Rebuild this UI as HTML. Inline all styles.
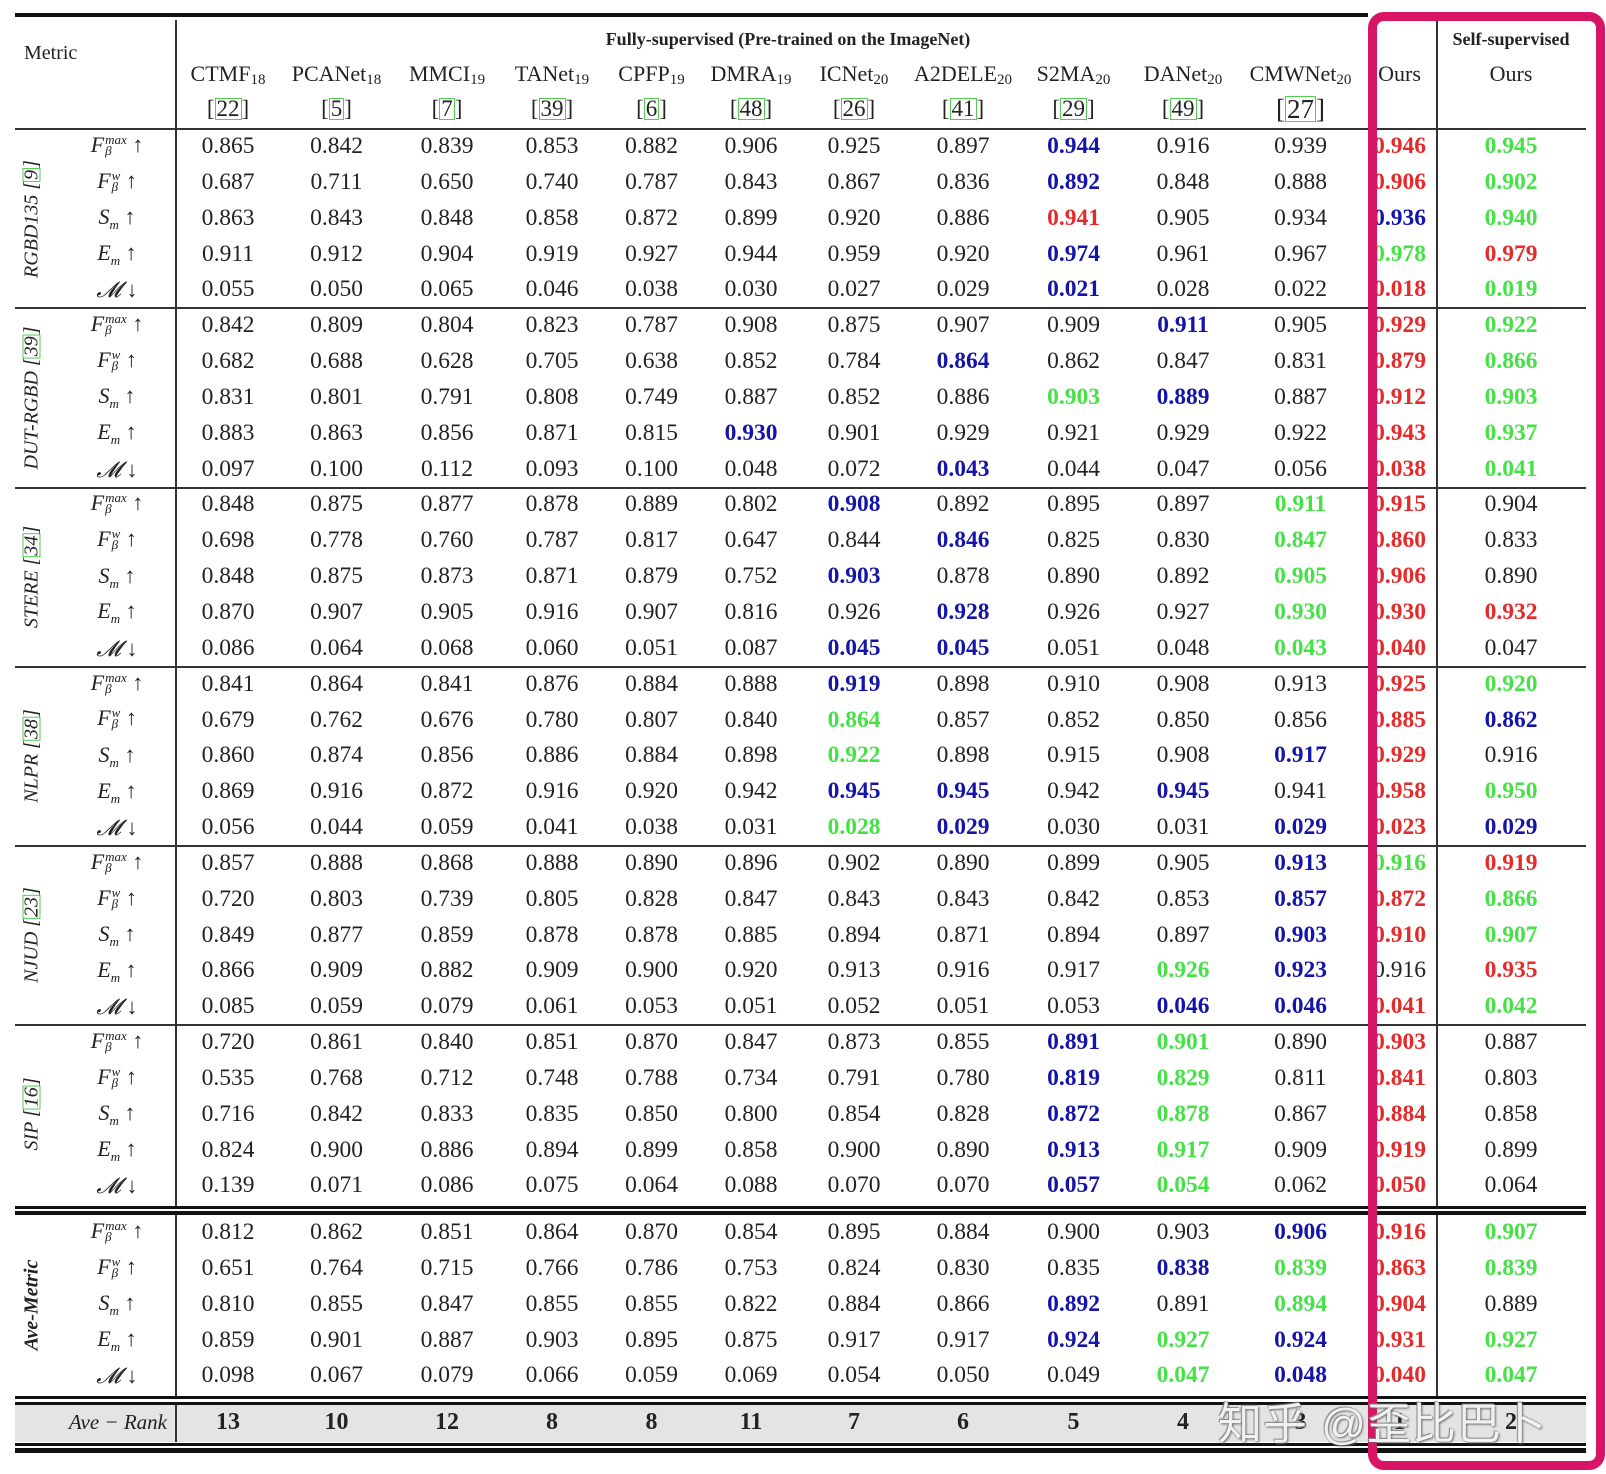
<!DOCTYPE html>
<html><head><meta charset="utf-8">
<style>
html,body{margin:0;padding:0;background:#fff;}
body{width:1606px;height:1474px;position:relative;overflow:hidden;font-family:"Liberation Serif",serif;color:#222;}
.a{position:absolute;}
.hl{position:absolute;background:#333;}
table{position:absolute;left:15px;border-collapse:collapse;table-layout:fixed;}
tr{height:35.84px;}
td{padding:0;height:35.84px;text-align:center;font-size:23.5px;white-space:nowrap;line-height:35.84px;overflow:hidden;}
td.m{font-style:italic;font-size:22px;padding-left:44px;text-align:center;line-height:0;}
.r{color:#e52a2a;font-weight:bold;}
.b{color:#1414a8;font-weight:bold;}
.g{color:#44e244;font-weight:bold;}
.sb{font-size:13px;position:relative;top:5px;}
.st{display:inline-block;vertical-align:middle;line-height:11px;text-align:left;font-size:13px;margin-left:1px;position:relative;top:-2px;}
.hd{position:absolute;font-size:22px;text-align:center;white-space:nowrap;}
.hd sub{font-size:15px;vertical-align:-3px;line-height:0;}
.ref{position:absolute;font-size:23px;text-align:center;}
.gb{border:1.5px solid #5c5;padding:0 1px;line-height:20px;display:inline-block;}
.ds{position:absolute;font-style:italic;font-size:20px;transform:translate(-50%,-50%) rotate(-90deg);white-space:nowrap;}
.rk td{font-weight:bold;font-size:24px;}
</style></head><body>

<div class="hl" style="left:15px;top:13px;width:1353px;height:4px;background:#111"></div>
<div class="hl" style="left:15px;top:128px;width:1571px;height:1.5px"></div>
<div class="hl" style="left:15px;top:307px;width:1571px;height:1.5px"></div>
<div class="hl" style="left:15px;top:487px;width:1571px;height:1.5px"></div>
<div class="hl" style="left:15px;top:666px;width:1571px;height:1.5px"></div>
<div class="hl" style="left:15px;top:845px;width:1571px;height:1.5px"></div>
<div class="hl" style="left:15px;top:1024px;width:1571px;height:1.5px"></div>
<div class="hl" style="left:15px;top:1206px;width:1571px;height:2.5px;background:#111"></div>
<div class="hl" style="left:15px;top:1211px;width:1571px;height:3.5px;background:#111"></div>
<div class="hl" style="left:15px;top:1396px;width:1571px;height:2.5px;background:#111"></div>
<div class="a" style="left:15px;top:1402px;width:1571px;height:40px;background:#e4e4e4;border-top:3.5px solid #111;box-sizing:border-box"></div>
<div class="hl" style="left:15px;top:1443px;width:1571px;height:2.5px;background:#111"></div>
<div class="hl" style="left:15px;top:1448px;width:1571px;height:5px;background:#111"></div>
<div class="hl" style="left:175px;top:20px;width:1.5px;height:1186px"></div>
<div class="hl" style="left:175px;top:1215px;width:1.5px;height:181px"></div>
<div class="hl" style="left:175px;top:1405px;width:1.5px;height:37px"></div>
<div class="hl" style="left:1436px;top:20px;width:1.5px;height:1186px"></div>
<div class="hl" style="left:1436px;top:1215px;width:1.5px;height:181px"></div>

<div class="a" style="left:24px;top:42px;font-size:20px">Metric</div>
<div class="a" style="left:560px;top:29px;width:456px;text-align:center;font-size:18px;font-weight:bold">Fully-supervised (Pre-trained on the ImageNet)</div>
<div class="a" style="left:1436px;top:29px;width:150px;text-align:center;font-size:18px;font-weight:bold">Self-supervised</div>
<div class="hd" style="left:175px;top:61px;width:106px">CTMF<sub>18</sub></div>
<div class="hd" style="left:281px;top:61px;width:111px">PCANet<sub>18</sub></div>
<div class="hd" style="left:392px;top:61px;width:110px">MMCI<sub>19</sub></div>
<div class="hd" style="left:502px;top:61px;width:100px">TANet<sub>19</sub></div>
<div class="hd" style="left:602px;top:61px;width:99px">CPFP<sub>19</sub></div>
<div class="hd" style="left:701px;top:61px;width:100px">DMRA<sub>19</sub></div>
<div class="hd" style="left:801px;top:61px;width:106px">ICNet<sub>20</sub></div>
<div class="hd" style="left:907px;top:61px;width:112px">A2DELE<sub>20</sub></div>
<div class="hd" style="left:1019px;top:61px;width:109px">S2MA<sub>20</sub></div>
<div class="hd" style="left:1128px;top:61px;width:110px">DANet<sub>20</sub></div>
<div class="hd" style="left:1238px;top:61px;width:125px">CMWNet<sub>20</sub></div>
<div class="hd" style="left:1363px;top:61px;width:73px">Ours</div>
<div class="hd" style="left:1436px;top:61px;width:150px">Ours</div>
<div class="ref" style="left:175px;top:96px;width:106px">[<span class="gb">22</span>]</div>
<div class="ref" style="left:281px;top:96px;width:111px">[<span class="gb">5</span>]</div>
<div class="ref" style="left:392px;top:96px;width:110px">[<span class="gb">7</span>]</div>
<div class="ref" style="left:502px;top:96px;width:100px">[<span class="gb">39</span>]</div>
<div class="ref" style="left:602px;top:96px;width:99px">[<span class="gb">6</span>]</div>
<div class="ref" style="left:701px;top:96px;width:100px">[<span class="gb">48</span>]</div>
<div class="ref" style="left:801px;top:96px;width:106px">[<span class="gb">26</span>]</div>
<div class="ref" style="left:907px;top:96px;width:112px">[<span class="gb">41</span>]</div>
<div class="ref" style="left:1019px;top:96px;width:109px">[<span class="gb">29</span>]</div>
<div class="ref" style="left:1128px;top:96px;width:110px">[<span class="gb">49</span>]</div>
<div class="ref" style="left:1238px;top:94px;width:125px;font-size:27px">[<span class="gb" style="line-height:24px">27</span>]</div>

<div class="ds" style="left:32px;top:219px">RGBD135 [<span class="gb" style="line-height:16px">9</span>]</div>
<div class="ds" style="left:32px;top:398px">DUT-RGBD [<span class="gb" style="line-height:16px">39</span>]</div>
<div class="ds" style="left:32px;top:577px">STERE [<span class="gb" style="line-height:16px">34</span>]</div>
<div class="ds" style="left:32px;top:756px">NLPR [<span class="gb" style="line-height:16px">38</span>]</div>
<div class="ds" style="left:32px;top:935px">NJUD [<span class="gb" style="line-height:16px">23</span>]</div>
<div class="ds" style="left:32px;top:1114px">SIP [<span class="gb" style="line-height:16px">16</span>]</div>
<div class="ds" style="left:32px;top:1305px;font-weight:bold">Ave-Metric</div>

<table style="top:129px">
<colgroup><col style="width:160px"><col style="width:106px"><col style="width:111px"><col style="width:110px"><col style="width:100px"><col style="width:99px"><col style="width:100px"><col style="width:106px"><col style="width:112px"><col style="width:109px"><col style="width:110px"><col style="width:125px"><col style="width:73px"><col style="width:150px"></colgroup>
<tr><td class="m">F<span class="st">max<br>β</span> ↑</td><td>0.865</td><td>0.842</td><td>0.839</td><td>0.853</td><td>0.882</td><td>0.906</td><td>0.925</td><td>0.897</td><td class="b">0.944</td><td>0.916</td><td>0.939</td><td class="r">0.946</td><td class="g">0.945</td></tr>
<tr><td class="m">F<span class="st">w<br>β</span> ↑</td><td>0.687</td><td>0.711</td><td>0.650</td><td>0.740</td><td>0.787</td><td>0.843</td><td>0.867</td><td>0.836</td><td class="b">0.892</td><td>0.848</td><td>0.888</td><td class="r">0.906</td><td class="g">0.902</td></tr>
<tr><td class="m">S<span class="sb">m</span> ↑</td><td>0.863</td><td>0.843</td><td>0.848</td><td>0.858</td><td>0.872</td><td>0.899</td><td>0.920</td><td>0.886</td><td class="r">0.941</td><td>0.905</td><td>0.934</td><td class="b">0.936</td><td class="g">0.940</td></tr>
<tr><td class="m">E<span class="sb">m</span> ↑</td><td>0.911</td><td>0.912</td><td>0.904</td><td>0.919</td><td>0.927</td><td>0.944</td><td>0.959</td><td>0.920</td><td class="b">0.974</td><td>0.961</td><td>0.967</td><td class="g">0.978</td><td class="r">0.979</td></tr>
<tr><td class="m">𝓜 ↓</td><td>0.055</td><td>0.050</td><td>0.065</td><td>0.046</td><td>0.038</td><td>0.030</td><td>0.027</td><td>0.029</td><td class="b">0.021</td><td>0.028</td><td>0.022</td><td class="r">0.018</td><td class="g">0.019</td></tr>

<tr><td class="m">F<span class="st">max<br>β</span> ↑</td><td>0.842</td><td>0.809</td><td>0.804</td><td>0.823</td><td>0.787</td><td>0.908</td><td>0.875</td><td>0.907</td><td>0.909</td><td class="b">0.911</td><td>0.905</td><td class="r">0.929</td><td class="g">0.922</td></tr>
<tr><td class="m">F<span class="st">w<br>β</span> ↑</td><td>0.682</td><td>0.688</td><td>0.628</td><td>0.705</td><td>0.638</td><td>0.852</td><td>0.784</td><td class="b">0.864</td><td>0.862</td><td>0.847</td><td>0.831</td><td class="r">0.879</td><td class="g">0.866</td></tr>
<tr><td class="m">S<span class="sb">m</span> ↑</td><td>0.831</td><td>0.801</td><td>0.791</td><td>0.808</td><td>0.749</td><td>0.887</td><td>0.852</td><td>0.886</td><td class="g">0.903</td><td class="b">0.889</td><td>0.887</td><td class="r">0.912</td><td class="g">0.903</td></tr>
<tr><td class="m">E<span class="sb">m</span> ↑</td><td>0.883</td><td>0.863</td><td>0.856</td><td>0.871</td><td>0.815</td><td class="b">0.930</td><td>0.901</td><td>0.929</td><td>0.921</td><td>0.929</td><td>0.922</td><td class="r">0.943</td><td class="g">0.937</td></tr>
<tr><td class="m">𝓜 ↓</td><td>0.097</td><td>0.100</td><td>0.112</td><td>0.093</td><td>0.100</td><td>0.048</td><td>0.072</td><td class="b">0.043</td><td>0.044</td><td>0.047</td><td>0.056</td><td class="r">0.038</td><td class="g">0.041</td></tr>

<tr><td class="m">F<span class="st">max<br>β</span> ↑</td><td>0.848</td><td>0.875</td><td>0.877</td><td>0.878</td><td>0.889</td><td>0.802</td><td class="b">0.908</td><td>0.892</td><td>0.895</td><td>0.897</td><td class="g">0.911</td><td class="r">0.915</td><td>0.904</td></tr>
<tr><td class="m">F<span class="st">w<br>β</span> ↑</td><td>0.698</td><td>0.778</td><td>0.760</td><td>0.787</td><td>0.817</td><td>0.647</td><td>0.844</td><td class="b">0.846</td><td>0.825</td><td>0.830</td><td class="g">0.847</td><td class="r">0.860</td><td>0.833</td></tr>
<tr><td class="m">S<span class="sb">m</span> ↑</td><td>0.848</td><td>0.875</td><td>0.873</td><td>0.871</td><td>0.879</td><td>0.752</td><td class="b">0.903</td><td>0.878</td><td>0.890</td><td>0.892</td><td class="g">0.905</td><td class="r">0.906</td><td>0.890</td></tr>
<tr><td class="m">E<span class="sb">m</span> ↑</td><td>0.870</td><td>0.907</td><td>0.905</td><td>0.916</td><td>0.907</td><td>0.816</td><td>0.926</td><td class="b">0.928</td><td>0.926</td><td>0.927</td><td class="g">0.930</td><td class="r">0.930</td><td class="r">0.932</td></tr>
<tr><td class="m">𝓜 ↓</td><td>0.086</td><td>0.064</td><td>0.068</td><td>0.060</td><td>0.051</td><td>0.087</td><td class="b">0.045</td><td class="b">0.045</td><td>0.051</td><td>0.048</td><td class="g">0.043</td><td class="r">0.040</td><td>0.047</td></tr>

<tr><td class="m">F<span class="st">max<br>β</span> ↑</td><td>0.841</td><td>0.864</td><td>0.841</td><td>0.876</td><td>0.884</td><td>0.888</td><td class="b">0.919</td><td>0.898</td><td>0.910</td><td>0.908</td><td>0.913</td><td class="r">0.925</td><td class="g">0.920</td></tr>
<tr><td class="m">F<span class="st">w<br>β</span> ↑</td><td>0.679</td><td>0.762</td><td>0.676</td><td>0.780</td><td>0.807</td><td>0.840</td><td class="g">0.864</td><td>0.857</td><td>0.852</td><td>0.850</td><td>0.856</td><td class="r">0.885</td><td class="b">0.862</td></tr>
<tr><td class="m">S<span class="sb">m</span> ↑</td><td>0.860</td><td>0.874</td><td>0.856</td><td>0.886</td><td>0.884</td><td>0.898</td><td class="g">0.922</td><td>0.898</td><td>0.915</td><td>0.908</td><td class="b">0.917</td><td class="r">0.929</td><td>0.916</td></tr>
<tr><td class="m">E<span class="sb">m</span> ↑</td><td>0.869</td><td>0.916</td><td>0.872</td><td>0.916</td><td>0.920</td><td>0.942</td><td class="b">0.945</td><td class="b">0.945</td><td>0.942</td><td class="b">0.945</td><td>0.941</td><td class="r">0.958</td><td class="g">0.950</td></tr>
<tr><td class="m">𝓜 ↓</td><td>0.056</td><td>0.044</td><td>0.059</td><td>0.041</td><td>0.038</td><td>0.031</td><td class="g">0.028</td><td class="b">0.029</td><td>0.030</td><td>0.031</td><td class="b">0.029</td><td class="r">0.023</td><td class="b">0.029</td></tr>

<tr><td class="m">F<span class="st">max<br>β</span> ↑</td><td>0.857</td><td>0.888</td><td>0.868</td><td>0.888</td><td>0.890</td><td>0.896</td><td>0.902</td><td>0.890</td><td>0.899</td><td>0.905</td><td class="b">0.913</td><td class="g">0.916</td><td class="r">0.919</td></tr>
<tr><td class="m">F<span class="st">w<br>β</span> ↑</td><td>0.720</td><td>0.803</td><td>0.739</td><td>0.805</td><td>0.828</td><td>0.847</td><td>0.843</td><td>0.843</td><td>0.842</td><td>0.853</td><td class="b">0.857</td><td class="r">0.872</td><td class="g">0.866</td></tr>
<tr><td class="m">S<span class="sb">m</span> ↑</td><td>0.849</td><td>0.877</td><td>0.859</td><td>0.878</td><td>0.878</td><td>0.885</td><td>0.894</td><td>0.871</td><td>0.894</td><td>0.897</td><td class="b">0.903</td><td class="r">0.910</td><td class="g">0.907</td></tr>
<tr><td class="m">E<span class="sb">m</span> ↑</td><td>0.866</td><td>0.909</td><td>0.882</td><td>0.909</td><td>0.900</td><td>0.920</td><td>0.913</td><td>0.916</td><td>0.917</td><td class="g">0.926</td><td class="b">0.923</td><td>0.916</td><td class="r">0.935</td></tr>
<tr><td class="m">𝓜 ↓</td><td>0.085</td><td>0.059</td><td>0.079</td><td>0.061</td><td>0.053</td><td>0.051</td><td>0.052</td><td>0.051</td><td>0.053</td><td class="b">0.046</td><td class="b">0.046</td><td class="r">0.041</td><td class="g">0.042</td></tr>

<tr><td class="m">F<span class="st">max<br>β</span> ↑</td><td>0.720</td><td>0.861</td><td>0.840</td><td>0.851</td><td>0.870</td><td>0.847</td><td>0.873</td><td>0.855</td><td class="b">0.891</td><td class="g">0.901</td><td>0.890</td><td class="r">0.903</td><td>0.887</td></tr>
<tr><td class="m">F<span class="st">w<br>β</span> ↑</td><td>0.535</td><td>0.768</td><td>0.712</td><td>0.748</td><td>0.788</td><td>0.734</td><td>0.791</td><td>0.780</td><td class="b">0.819</td><td class="g">0.829</td><td>0.811</td><td class="r">0.841</td><td>0.803</td></tr>
<tr><td class="m">S<span class="sb">m</span> ↑</td><td>0.716</td><td>0.842</td><td>0.833</td><td>0.835</td><td>0.850</td><td>0.800</td><td>0.854</td><td>0.828</td><td class="b">0.872</td><td class="g">0.878</td><td>0.867</td><td class="r">0.884</td><td>0.858</td></tr>
<tr><td class="m">E<span class="sb">m</span> ↑</td><td>0.824</td><td>0.900</td><td>0.886</td><td>0.894</td><td>0.899</td><td>0.858</td><td>0.900</td><td>0.890</td><td class="b">0.913</td><td class="g">0.917</td><td>0.909</td><td class="r">0.919</td><td>0.899</td></tr>
<tr><td class="m">𝓜 ↓</td><td>0.139</td><td>0.071</td><td>0.086</td><td>0.075</td><td>0.064</td><td>0.088</td><td>0.070</td><td>0.070</td><td class="b">0.057</td><td class="g">0.054</td><td>0.062</td><td class="r">0.050</td><td>0.064</td></tr>
</table>

<table style="top:1215px">
<colgroup><col style="width:160px"><col style="width:106px"><col style="width:111px"><col style="width:110px"><col style="width:100px"><col style="width:99px"><col style="width:100px"><col style="width:106px"><col style="width:112px"><col style="width:109px"><col style="width:110px"><col style="width:125px"><col style="width:73px"><col style="width:150px"></colgroup>
<tr><td class="m">F<span class="st">max<br>β</span> ↑</td><td>0.812</td><td>0.862</td><td>0.851</td><td>0.864</td><td>0.870</td><td>0.854</td><td>0.895</td><td>0.884</td><td>0.900</td><td>0.903</td><td class="b">0.906</td><td class="r">0.916</td><td class="g">0.907</td></tr>
<tr><td class="m">F<span class="st">w<br>β</span> ↑</td><td>0.651</td><td>0.764</td><td>0.715</td><td>0.766</td><td>0.786</td><td>0.753</td><td>0.824</td><td>0.830</td><td>0.835</td><td class="b">0.838</td><td class="g">0.839</td><td class="r">0.863</td><td class="g">0.839</td></tr>
<tr><td class="m">S<span class="sb">m</span> ↑</td><td>0.810</td><td>0.855</td><td>0.847</td><td>0.855</td><td>0.855</td><td>0.822</td><td>0.884</td><td>0.866</td><td class="b">0.892</td><td>0.891</td><td class="g">0.894</td><td class="r">0.904</td><td>0.889</td></tr>
<tr><td class="m">E<span class="sb">m</span> ↑</td><td>0.859</td><td>0.901</td><td>0.887</td><td>0.903</td><td>0.895</td><td>0.875</td><td>0.917</td><td>0.917</td><td class="b">0.924</td><td class="g">0.927</td><td class="b">0.924</td><td class="r">0.931</td><td class="g">0.927</td></tr>
<tr><td class="m">𝓜 ↓</td><td>0.098</td><td>0.067</td><td>0.079</td><td>0.066</td><td>0.059</td><td>0.069</td><td>0.054</td><td>0.050</td><td>0.049</td><td class="g">0.047</td><td class="b">0.048</td><td class="r">0.040</td><td class="g">0.047</td></tr>
</table>

<table class="rk" style="top:1405px">
<colgroup><col style="width:160px"><col style="width:106px"><col style="width:111px"><col style="width:110px"><col style="width:100px"><col style="width:99px"><col style="width:100px"><col style="width:106px"><col style="width:112px"><col style="width:109px"><col style="width:110px"><col style="width:125px"><col style="width:73px"><col style="width:150px"></colgroup>
<tr><td style="font-weight:normal;font-style:italic;font-size:21px;text-align:right;padding-right:8px">Ave − Rank</td><td>13</td><td>10</td><td>12</td><td>8</td><td>8</td><td>11</td><td>7</td><td>6</td><td>5</td><td>4</td><td>3</td><td>1</td><td>2</td></tr>
</table>

<div class="a" style="left:1368px;top:12px;width:237px;height:1458px;border:9px solid #d81465;border-radius:16px;box-sizing:border-box"></div>

<div class="a" style="left:1218px;top:1388px;font-family:'Liberation Sans','Noto Sans CJK SC',sans-serif;font-size:44px;color:rgba(255,255,255,0.9);text-shadow:1px 1px 2px #666,-1px -1px 1px #888;white-space:nowrap;letter-spacing:1px">知乎 @歪比巴卜</div>

</body></html>
